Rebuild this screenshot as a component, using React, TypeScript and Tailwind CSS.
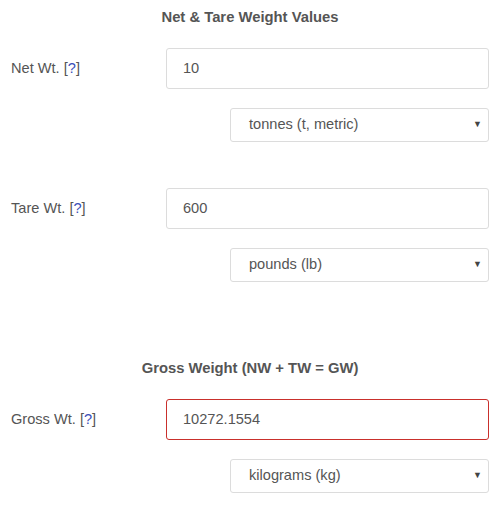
import React from 'react';

const Label = ({ text }: { text: string }) => (
  <div className="w-[166px] shrink-0 pl-[11px] text-[14.6px] text-[#555]">
    {text} [<span className="text-[#3b4fb8]">?</span>]
  </div>
);

const NumberField = ({ value, error }: { value: string; error?: boolean }) => (
  <div
    className={`flex h-[41px] flex-1 items-center rounded-[3px] border bg-white pl-[16px] text-[14.6px] text-[#555] ${
      error ? 'border-[#c9302c]' : 'border-[#dcdcdc]'
    }`}
  >
    {value}
  </div>
);

const UnitSelect = ({ value }: { value: string }) => (
  <div className="ml-[230px] flex h-[34px] items-center justify-between rounded-[3px] border border-[#dcdcdc] bg-white pl-[18px] pr-[6px] text-[14.6px] text-[#555]">
    <span>{value}</span>
    <span className="text-[9px] text-[#444]">▼</span>
  </div>
);

const Field = ({ label, value, unit, error }: { label: string; value: string; unit: string; error?: boolean }) => (
  <div className="flex flex-col gap-[19px]">
    <div className="flex items-center">
      <Label text={label} />
      <NumberField value={value} error={error} />
    </div>
    <UnitSelect value={unit} />
  </div>
);

export default function App() {
  return (
    <div
      className="w-[500px] h-[507px] bg-white pr-[11px] pt-[8px]"
      style={{ fontFamily: '"Liberation Sans", Arial, sans-serif' }}
    >
      <h2 className="pl-[11px] text-center text-[14.8px] font-bold text-[#555] leading-[18px]">
        Net &amp; Tare Weight Values
      </h2>
      <div className="mt-[22px] flex flex-col gap-[46px]">
        <Field label="Net Wt." value="10" unit="tonnes (t, metric)" />
        <Field label="Tare Wt." value="600" unit="pounds (lb)" />
      </div>
      <h2 className="mt-[77px] pl-[11px] text-center text-[14.8px] font-bold text-[#555] leading-[18px]">
        Gross Weight (NW + TW = GW)
      </h2>
      <div className="mt-[22px]">
        <Field label="Gross Wt." value="10272.1554" unit="kilograms (kg)" error />
      </div>
    </div>
  );
}
